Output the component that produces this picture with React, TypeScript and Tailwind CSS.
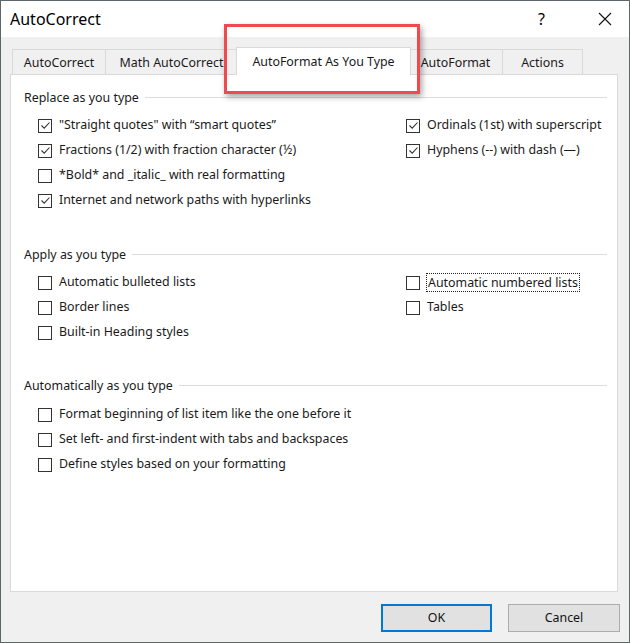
import React from "react";

const font = { fontFamily: '"Noto Sans", "Segoe UI", Arial, sans-serif' };

function Box({ checked }: { checked?: boolean }) {
  return (
    <div className="w-[14px] h-[14px] border border-[#333333] bg-white flex items-center justify-center shrink-0">
      {checked && (
        <svg width="11" height="11" viewBox="0 0 11 11">
          <path d="M1.5 5.5 L4.2 8.2 L9.5 2.5" fill="none" stroke="#333333" strokeWidth="1.1" />
        </svg>
      )}
    </div>
  );
}

function Row({ label, checked, focus }: { label: string; checked?: boolean; focus?: boolean }) {
  return (
    <div className="h-[25px] flex items-center gap-[7px]">
      <Box checked={checked} />
      <span className={focus ? "outline outline-1 outline-dotted outline-[#222] px-[1px] leading-[17px]" : ""}>{label}</span>
    </div>
  );
}

function Header({ title }: { title: string }) {
  return (
    <div className="h-[20px] flex items-center gap-[6px] pl-[13px] pr-[10px]">
      <span>{title}</span>
      <div className="flex-1 h-px bg-[#dcdcdc] -mt-[2px]" />
    </div>
  );
}

export default function App() {
  return (
    <div
      style={font}
      className="relative w-[630px] h-[643px] border border-[#5b676b] flex flex-col text-[12.4px] text-[#1a1a1a] overflow-hidden"
    >
      <div className="h-[36px] bg-white flex items-center pl-[9px] shrink-0">
        <span className="text-[16px] text-black">AutoCorrect</span>
        <div className="flex-1" />
        <span className="text-[16px] text-black w-[14px] mr-[46px]">?</span>
        <svg width="14" height="14" viewBox="0 0 14 14" className="mr-[17px]">
          <path d="M1 1 L13 13 M13 1 L1 13" stroke="#111" strokeWidth="1.1" />
        </svg>
      </div>
      <div className="flex-1 bg-[#f0f0f0] flex flex-col">
        <div className="mt-[10px] ml-[11px] flex items-end h-[27px] relative z-10">
          <div className="w-[94px] h-[25px] border border-b-0 border-[#d9d9d9] flex items-center justify-center pt-[3px]">AutoCorrect</div>
          <div className="w-[132px] h-[25px] border border-b-0 border-l-0 border-[#d9d9d9] flex items-center justify-center pt-[3px]">Math AutoCorrect</div>
          <div className="w-[175px] h-[28px] -mx-[2px] -mb-px bg-white border border-b-0 border-[#d9d9d9] flex items-center justify-center relative z-10 pt-[2px]">AutoFormat As You Type</div>
          <div className="w-[94px] h-[25px] border border-b-0 border-l-0 border-[#d9d9d9] flex items-center justify-center pt-[3px]">AutoFormat</div>
          <div className="w-[80px] h-[25px] border border-b-0 border-l-0 border-[#d9d9d9] flex items-center justify-center pt-[3px]">Actions</div>
        </div>
        <div className="ml-[9px] w-[608px] h-[518px] bg-white border border-[#d9d9d9] pt-[13px]">
          <Header title="Replace as you type" />
          <div className="mt-[5px] pl-[27px] grid grid-cols-[368px_1fr]">
            <div>
              <Row checked label={'"Straight quotes" with \u201csmart quotes\u201d'} />
              <Row checked label="Fractions (1/2) with fraction character (½)" />
              <Row label="*Bold* and _italic_ with real formatting" />
              <Row checked label="Internet and network paths with hyperlinks" />
            </div>
            <div>
              <Row checked label="Ordinals (1st) with superscript" />
              <Row checked label="Hyphens (--) with dash (—)" />
            </div>
          </div>
          <div className="mt-[32px]">
            <Header title="Apply as you type" />
          </div>
          <div className="mt-[5px] pl-[27px] grid grid-cols-[368px_1fr]">
            <div>
              <Row label="Automatic bulleted lists" />
              <Row label="Border lines" />
              <Row label="Built-in Heading styles" />
            </div>
            <div>
              <Row focus label="Automatic numbered lists" />
              <Row label="Tables" />
            </div>
          </div>
          <div className="mt-[31px]">
            <Header title="Automatically as you type" />
          </div>
          <div className="mt-[6px] pl-[27px]">
            <Row label="Format beginning of list item like the one before it" />
            <Row label="Set left- and first-indent with tabs and backspaces" />
            <Row label="Define styles based on your formatting" />
          </div>
        </div>
        <div className="mt-[12px] flex justify-end gap-[16px] pr-[9px]">
          <button className="w-[111px] h-[28px] bg-[#e1e1e1] border-2 border-[#0078d7] text-[#111]">OK</button>
          <button className="w-[112px] h-[28px] bg-[#e1e1e1] border border-[#adadad] text-[#111]">Cancel</button>
        </div>
      </div>
      <div className="absolute left-[223px] top-[23px] w-[196px] h-[70px] border-[3px] border-[#f04a4e] shadow-[2px_3px_6px_rgba(0,0,0,0.35)] z-20 pointer-events-none" />
    </div>
  );
}
